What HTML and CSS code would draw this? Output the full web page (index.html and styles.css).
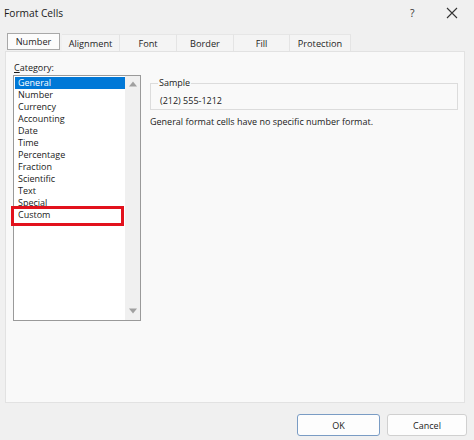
FILE: index.html
```html
<!DOCTYPE html>
<html>
<head>
<meta charset="utf-8">
<link rel="stylesheet" href="styles.css">
</head>
<body>
<div class="dialog">
  <div class="titlebar">
    <span class="title">Format Cells</span>
    <span class="help">?</span>
    <span class="close">
      <svg width="12" height="12" viewBox="0 0 12 12"><path d="M1 1 L11 11 M11 1 L1 11" stroke="#333" stroke-width="1.1" fill="none"/></svg>
    </span>
  </div>
  <div class="tabs">
    <div class="tab active">Number</div>
    <div class="tab w58">Alignment</div>
    <div class="tab w57">Font</div>
    <div class="tab w56">Border</div>
    <div class="tab w55">Fill</div>
    <div class="tab w60">Protection</div>
  </div>
  <div class="panel">
    <div class="leftcol">
      <div class="label"><u>C</u>ategory:</div>
      <div class="listbox">
        <div class="items">
          <div class="item selected">General</div>
          <div class="item">Number</div>
          <div class="item">Currency</div>
          <div class="item">Accounting</div>
          <div class="item">Date</div>
          <div class="item">Time</div>
          <div class="item">Percentage</div>
          <div class="item">Fraction</div>
          <div class="item">Scientific</div>
          <div class="item">Text</div>
          <div class="item">Special</div>
          <div class="item">Custom</div>
        </div>
        <div class="scrollbar">
          <svg class="arrow" width="8" height="6" viewBox="0 0 8 6"><path d="M0 5.5 L4 0.5 L8 5.5 Z" fill="#a0a0a0"/></svg>
          <svg class="arrow" width="8" height="6" viewBox="0 0 8 6"><path d="M0 0.5 L4 5.5 L8 0.5 Z" fill="#a0a0a0"/></svg>
        </div>
        <div class="highlight"></div>
      </div>
    </div>
    <div class="rightcol">
      <fieldset class="sample">
        <legend>Sample</legend>
        <div class="samplevalue">(212) 555-1212</div>
      </fieldset>
      <div class="desc">General format cells have no specific number format.</div>
    </div>
  </div>
  <div class="footer">
    <button class="btn ok">OK</button>
    <button class="btn">Cancel</button>
  </div>
</div>
</body>
</html>
```
FILE: styles.css
```css
html, body {
  margin: 0;
  padding: 0;
}
body {
  width: 474px;
  height: 440px;
  background: #f0f0f0;
  font-family: "Open Sans", "Noto Sans", sans-serif;
  color: #1a1a1a;
  overflow: hidden;
}
.dialog {
  width: 474px;
  height: 440px;
  display: flex;
  flex-direction: column;
}
.titlebar {
  height: 27px;
  display: flex;
  align-items: center;
  padding-left: 4px;
}
.title {
  font-size: 10.2px;
  flex: 1;
  padding-bottom: 2px;
}
.help {
  font-size: 10.5px;
  color: #333;
  width: 12px;
  margin-right: 24px;
  padding-bottom: 2px;
}
.close {
  width: 12px;
  margin-right: 16px;
  display: flex;
  padding-bottom: 2px;
}
.tabs {
  display: flex;
  margin-top: 6px;
  margin-left: 7px;
  height: 18px;
  align-items: flex-end;
}
.tab {
  height: 17px;
  box-sizing: border-box;
  font-size: 9.2px;
  display: flex;
  align-items: center;
  justify-content: center;
  color: #1e1e1e;
  background: #f4f4f4;
  border-top: 1px solid #e6e6e6;
  border-right: 1px solid #e4e4e4;
}
.tab.active {
  width: 53px;
  height: 17px;
  background: #fcfcfc;
  border: 1px solid #a8a8a8;
  margin-right: 2px;
  margin-bottom: 1px;
}
.w58 { width: 58px; }
.w57 { width: 57px; }
.w56 { width: 57px; }
.w55 { width: 56px; }
.w60 { width: 61px; }
.panel {
  margin-left: 5px;
  width: 460px;
  height: 352px;
  box-sizing: border-box;
  background: #f9f9f9;
  border: 1px solid #e2e2e2;
  display: flex;
  padding: 9px 0 0 7px;
}
.leftcol {
  width: 128px;
  display: flex;
  flex-direction: column;
}
.label {
  font-size: 9px;
  height: 14px;
  line-height: 14px;
  padding-left: 1px;
}
.listbox {
  position: relative;
  width: 128px;
  height: 246px;
  box-sizing: border-box;
  background: #fff;
  border: 1px solid #9a9a9a;
  display: flex;
}
.items {
  flex: 1;
  padding: 1px 0 0 1px;
}
.item {
  font-size: 9px;
  height: 12px;
  line-height: 12px;
  padding-left: 3px;
}
.item.selected {
  background: #0078d7;
  color: #fff;
}
.scrollbar {
  width: 15px;
  background: #f0f0f0;
  display: flex;
  flex-direction: column;
  justify-content: space-between;
  align-items: center;
  padding: 5px 0 6px;
}
.highlight {
  position: absolute;
  left: -3px;
  top: 130px;
  width: 113px;
  height: 20px;
  box-sizing: border-box;
  border: 3px solid #e2111c;
}
.rightcol {
  margin-left: 9px;
  width: 308px;
  padding-top: 17px;
}
.sample {
  margin: 0;
  padding: 8px 0 3px 9px;
  border: 1px solid #dcdcdc;
  height: 32px;
  box-sizing: border-box;
}
.sample legend {
  font-size: 9px;
  padding: 0 1px;
  margin-left: -2px;
  line-height: 10px;
}
.samplevalue {
  font-size: 9px;
  line-height: 12px;
  margin-top: -1px;
}
.desc {
  font-size: 9px;
  margin-top: 6px;
  line-height: 12px;
}
.footer {
  display: flex;
  justify-content: flex-end;
  padding: 11px 7px 0 0;
  gap: 7px;
}
.btn {
  font-family: "Open Sans", "Noto Sans", sans-serif;
  font-size: 9px;
  color: #1a1a1a;
  width: 80px;
  height: 22px;
  background: #fdfdfd;
  border: 1px solid #d0d0d0;
  border-radius: 3px;
  padding: 0;
}
.btn.ok {
  width: 83px;
  border: 1px solid #7a9cc4;
}
```
